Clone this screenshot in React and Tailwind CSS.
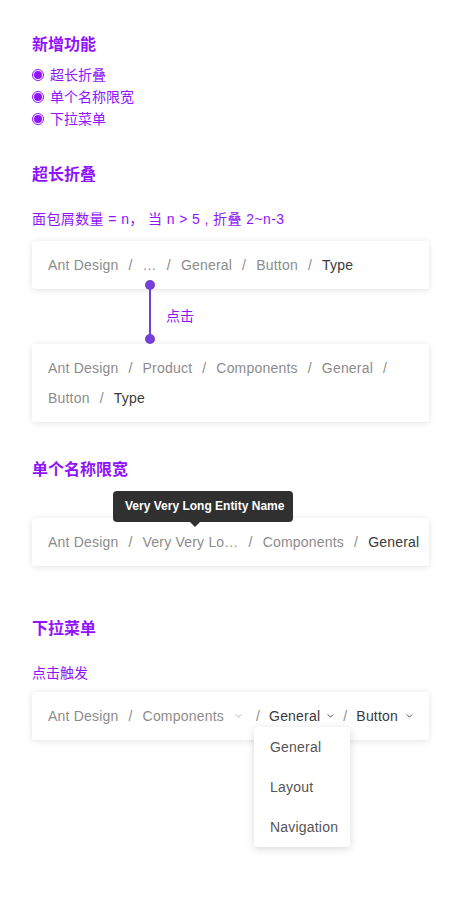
import React from 'react';

const font = { fontFamily: '"Liberation Sans", "Noto Sans CJK SC", sans-serif' };

function Heading({ children, className = '' }) {
  return (
    <h2 className={`text-[16px] leading-[24px] font-bold text-[#9013fe] ${className}`}>{children}</h2>
  );
}

function Sep({ className = 'mx-[10px]' }) {
  return <span className={`${className} text-[#8c8c8c]`}>/</span>;
}

function Chevron({ color = '#999', className = 'ml-[6px]' }) {
  return (
    <svg width="9" height="6" viewBox="0 0 9 6" className={`inline-block ${className}`}>
      <polyline points="1,1 4.5,4.5 8,1" fill="none" stroke={color} strokeWidth="1.2" />
    </svg>
  );
}

function Card({ children, className = '' }) {
  return (
    <div className={`rounded-[3px] bg-white px-4 py-[13px] text-[14px] leading-[22px] tracking-[0.2px] text-[#8c8c8c] shadow-[0_1px_6px_rgba(0,0,0,0.12)] ${className}`}>
      {children}
    </div>
  );
}

function Radio({ children }) {
  return (
    <li className="flex items-center gap-[6px] text-[14px] leading-[22px] text-[#9013fe]">
      <span className="flex h-[12px] w-[12px] items-center justify-center rounded-full border border-[#9013fe]">
        <span className="h-[8px] w-[8px] rounded-full bg-[#9013fe]" />
      </span>
      {children}
    </li>
  );
}

function Dot({ className }) {
  return <span className={`absolute left-[113px] h-[10px] w-[10px] rounded-full bg-[#7340d8] ${className}`} />;
}

export default function App() {
  return (
    <div className="min-h-[922px] bg-white pl-8 pr-[31px] pt-[33px]" style={font}>
      <Heading>新增功能</Heading>
      <ul className="mt-[7px]">
        <Radio>超长折叠</Radio>
        <Radio>单个名称限宽</Radio>
        <Radio>下拉菜单</Radio>
      </ul>

      <Heading className="mt-[33px]">超长折叠</Heading>
      <p className="mt-[21px] text-[14px] leading-[22px] tracking-[0.4px] text-[#9013fe]">面包屑数量 = n， 当 n &gt; 5 , 折叠 2~n-3</p>

      <Card className="mt-[11px]">
        Ant Design<Sep />…<Sep />General<Sep />Button<Sep /><span className="text-[#3a3a3a]">Type</span>
      </Card>

      <div className="relative z-10 h-[55px]">
        <span className="absolute left-[117px] top-[-4px] h-[54px] w-[2px] bg-[#7340d8]" />
        <Dot className="top-[-9px]" />
        <Dot className="top-[45px]" />
        <span className="absolute left-[134px] top-[16px] text-[14px] leading-[22px] text-[#9013fe]">点击</span>
      </div>

      <Card>
        <div className="flex flex-wrap gap-y-2">
          <span>Ant Design<Sep /></span>
          <span>Product<Sep /></span>
          <span>Components<Sep /></span>
          <span>General<Sep /></span>
          <span>Button<Sep /></span>
          <span className="text-[#3a3a3a]">Type</span>
        </div>
      </Card>

      <Heading className="mt-[36px]">单个名称限宽</Heading>

      <div className="relative mt-[36px]">
        <div className="absolute left-[81px] top-[-27px] z-10 rounded-[4px] bg-[#303030] pl-3 pr-[9px] py-[6px] text-[12px] leading-[19px] font-semibold text-white">
          Very Very Long Entity Name
          <span className="absolute left-[77px] top-full h-0 w-0 border-x-[5px] border-t-[5px] border-x-transparent border-t-[#303030]" />
        </div>
        <Card className="whitespace-nowrap">
          Ant Design<Sep />Very Very Lo…<Sep />Components<Sep /><span className="text-[#3a3a3a]">General</span>
        </Card>
      </div>

      <Heading className="mt-[51px]">下拉菜单</Heading>
      <p className="mt-[21px] text-[14px] leading-[22px] text-[#9013fe]">点击触发</p>

      <div className="relative mt-[8px]">
        <Card className="flex items-center whitespace-nowrap">
          Ant Design<Sep />Components
          <Chevron color="#aaa" className="ml-[11px]" />
          <Sep className="ml-[14px] mr-[9px]" />
          <span className="text-[#3a3a3a]">General</span>
          <Chevron color="#444" className="ml-[7px]" />
          <Sep className="mx-[9px]" />
          <span className="text-[#3a3a3a]">Button</span>
          <Chevron color="#444" className="ml-[8px]" />
        </Card>
        <div className="absolute left-[222px] top-[35px] z-10 w-[96px] rounded-[3px] bg-white text-[14px] leading-[40px] tracking-[0.2px] text-[#555] shadow-[0_2px_8px_rgba(0,0,0,0.15)]">
          <div className="px-4">General</div>
          <div className="px-4">Layout</div>
          <div className="px-4">Navigation</div>
        </div>
      </div>
    </div>
  );
}
